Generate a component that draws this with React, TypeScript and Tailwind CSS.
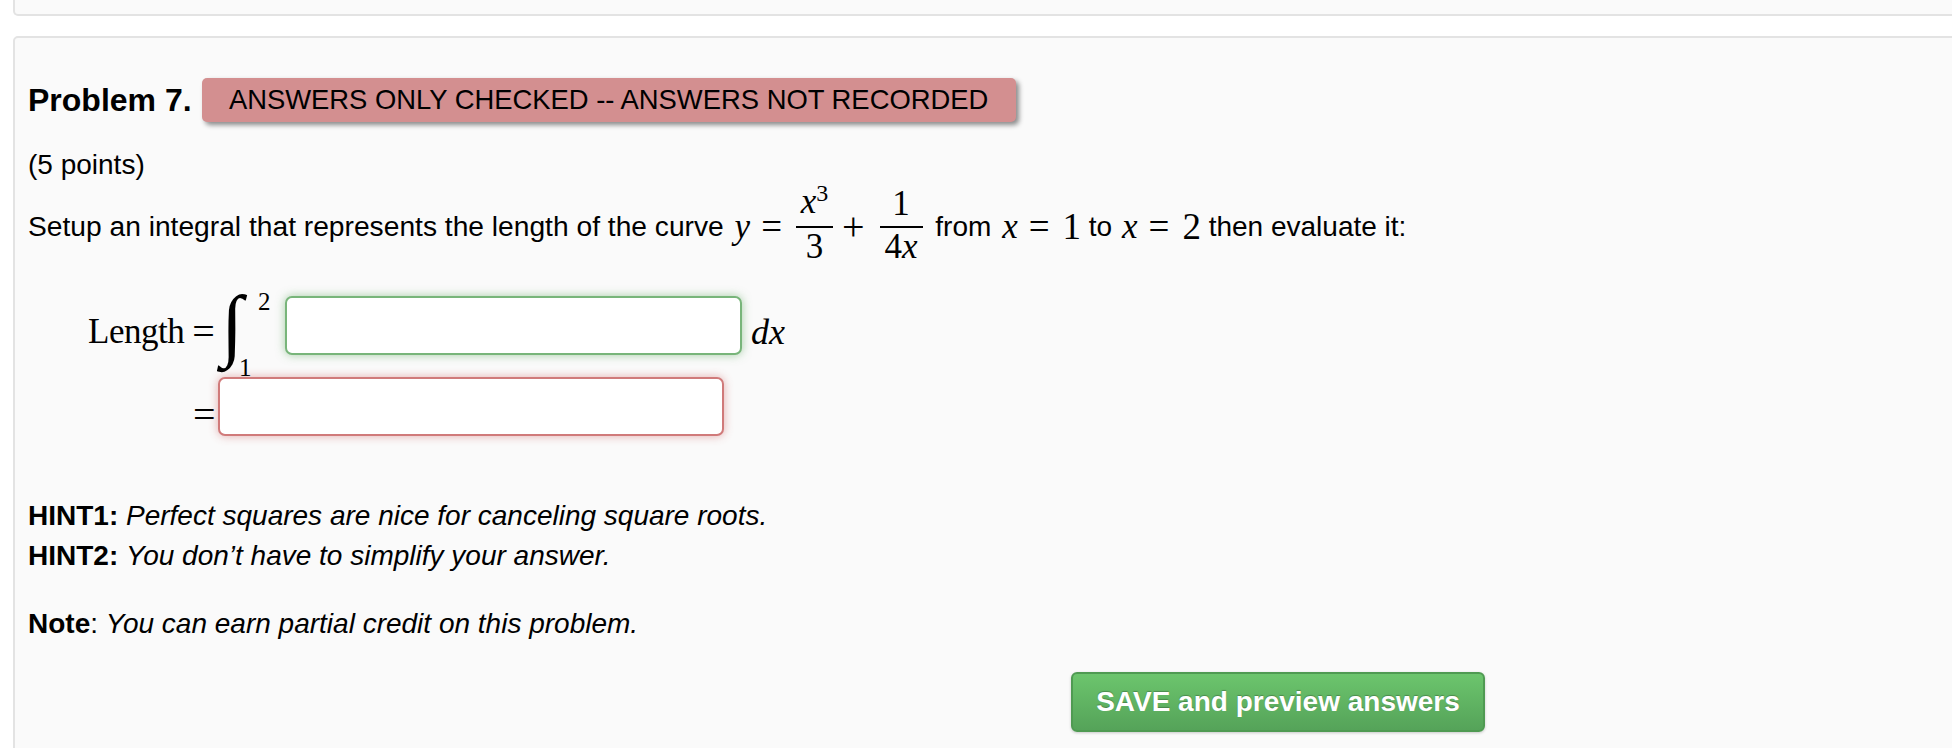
const serif = 'font-["Liberation_Serif",serif]'

function Frac({ top, bottom, width }: { top: React.ReactNode; bottom: React.ReactNode; width: string }) {
  return (
    <span className={`inline-flex flex-col items-center ${width} ${serif} text-[35px] leading-[37px]`}>
      <span className="h-[42px] pb-[4px] flex items-end justify-center">{top}</span>
      <span className="h-[2px] w-full bg-black" />
      <span className="h-[42px] flex items-start justify-center">{bottom}</span>
    </span>
  )
}

function Mi({ children, className = '' }: { children: React.ReactNode; className?: string }) {
  return <i className={`${serif} text-[35px] ${className}`}>{children}</i>
}

function Eq() {
  return <span className={`${serif} text-[37px] mx-[11px]`}>=</span>
}

export default function App() {
  return (
    <div className='w-[1952px] h-[748px] overflow-hidden bg-white text-black font-["Liberation_Sans",Arial,sans-serif] text-[28px]'>
      <div className="ml-[13px] w-[2000px] h-[16px] bg-[#fafafa] border-2 border-t-0 border-[#e3e3e3] rounded-b-[5px]" />

      <div className="mt-[20px] ml-[13px] w-[2000px] h-[760px] bg-[#fafafa] border-2 border-[#e3e3e3] rounded-[5px] pl-[13px] pt-[39px]">
        <div className="flex items-center h-[46px]">
          <b className="text-[32px]">Problem 7.</b>
          <span className="ml-[10px] h-[44px] w-[814px] flex items-center justify-center rounded-[5px] bg-[#d38f90] shadow-[3px_3px_5px_rgba(0,0,0,0.45)] text-[27.4px]">
            ANSWERS ONLY CHECKED -- ANSWERS NOT RECORDED
          </span>
        </div>

        <p className="mt-[22px] leading-[40px]">(5 points)</p>

        <div className="-mt-[1px] flex items-center h-[86px] whitespace-pre">
          <span className="text-[28.2px] -mt-[1px]">Setup an integral that represents the length of the curve </span>
          <Mi className="ml-[3px]">y</Mi>
          <Eq />
          <Frac
            width="w-[37px] ml-[3px]"
            top={<span className="pb-[2px]"><i>x</i><sup className="text-[24px] leading-none">3</sup></span>}
            bottom="3"
          />
          <span className={`${serif} text-[40px] ml-[9px] mr-[9px]`}>+</span>
          <Frac width="w-[43px] ml-[6px]" top="1" bottom={<span>4<i>x</i></span>} />
          <span className="ml-[5px]"> from </span>
          <Mi className="ml-[3px]">x</Mi>
          <Eq />
          <span className={`${serif} text-[37px] ml-[2px]`}>1</span>
          <span> to </span>
          <Mi className="ml-[2px]">x</Mi>
          <Eq />
          <span className={`${serif} text-[37px] ml-[2px]`}>2</span>
          <span> then evaluate it:</span>
        </div>

        {/* integral row */}
        <div className={`mt-[23px] ml-[60px] flex items-start h-[80px] ${serif} text-[35px]`}>
          <span className="w-[132px] mt-[13px] flex items-center">
            <span className="tracking-[-0.5px]">Length</span>
            <span className="ml-[8px] text-[40px] leading-none">=</span>
          </span>
          <span className="relative w-[65px] h-[80px]">
            <span className='absolute left-[1px] top-[-28px] text-[80px] leading-[110px] font-["Noto_Sans"]'>∫</span>
            <span className="absolute left-[38px] top-[-4px] text-[25px] leading-none">2</span>
            <span className="absolute left-[19px] top-[62px] text-[25px] leading-none">1</span>
          </span>
          <span className="mt-[3px] h-[59px] w-[457px] bg-white border-2 border-[#78b57a] rounded-[7px] shadow-[0_0_10px_rgba(80,160,80,0.5)]" />
          <i className="ml-[9px] mt-[19px] text-[36px] leading-[40px]">dx</i>
        </div>

        <div className={`mt-[4px] ml-[165px] flex items-center ${serif} text-[40px]`}>
          <span className="mt-[16px] w-[25px] leading-none">=</span>
          <span className="h-[59px] w-[506px] bg-white border-2 border-[#d07a7a] rounded-[7px] shadow-[0_0_10px_rgba(200,80,80,0.45)]" />
        </div>

        <div className="mt-[60px] leading-[40px]">
          <p><b>HINT1:</b> <i>Perfect squares are nice for canceling square roots.</i></p>
          <p><b>HINT2:</b> <i>You don’t have to simplify your answer.</i></p>
          <p className="mt-[28px]"><b>Note</b>: <i>You can earn partial credit on this problem.</i></p>
        </div>

        <button className="block mt-[28px] ml-[1043px] h-[60px] w-[414px] rounded-[6px] border-2 border-[#4f9a52] bg-gradient-to-b from-[#6cc56d] to-[#55a359] text-white font-bold text-[28px] shadow-[0_1px_3px_rgba(0,0,0,0.2)] [text-shadow:0_-1px_1px_rgba(0,0,0,0.25)]">
          SAVE and preview answers
        </button>
      </div>
    </div>
  )
}
